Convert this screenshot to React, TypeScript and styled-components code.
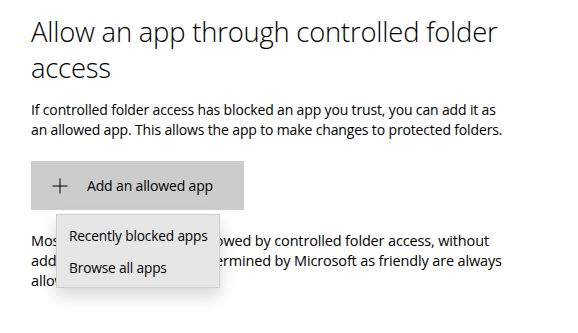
import { createGlobalStyle } from "styled-components";
import styled from "styled-components";

const GlobalStyle = createGlobalStyle`
  html, body {
    margin: 0;
    padding: 0;
    background: #ffffff;
  }
  body {
    min-height: 100vh;
    font-family: "Open Sans", "Noto Sans", "Liberation Sans", sans-serif;
    color: #000000;
  }
`;

export default function App() {
  return (
    <>
      <GlobalStyle />
      <Page>
        <Title>Allow an app through controlled folder access</Title>
        <Body>
          If controlled folder access has blocked an app you trust, you can add
          it as an allowed app. This allows the app to make changes to protected
          folders.
        </Body>

        <ButtonArea>
          <AddButton type="button">
            <PlusIcon viewBox="0 0 16 16" aria-hidden="true">
              <path d="M8 0.5V15.5M0.5 8H15.5" />
            </PlusIcon>
            Add an allowed app
          </AddButton>

          <Menu role="menu">
            <MenuItem role="menuitem">Recently blocked apps</MenuItem>
            <MenuItem role="menuitem">Browse all apps</MenuItem>
          </Menu>
        </ButtonArea>

        <Body $size={14.5}>
          Most of your apps will be allowed by controlled folder access, without
          adding them here. Apps determined by Microsoft as friendly are always
          allowed.
        </Body>
      </Page>
    </>
  );
}

const Page = styled.main`
  display: flex;
  flex-direction: column;
  align-items: flex-start;
  padding: 14px 31px 0;
  max-width: 480px;
`;

const Title = styled.h1`
  margin: 0 0 14px;
  font-size: 27.4px;
  font-weight: 300;
  line-height: 36px;
  letter-spacing: -0.2px;
`;

const Body = styled.p<{ $size?: number }>`
  margin: 0;
  font-size: ${(p) => p.$size ?? 14}px;
  line-height: 20px;
  letter-spacing: -0.15px;
`;

const ButtonArea = styled.div`
  position: relative;
  margin: 21px 0;
`;

const AddButton = styled.button`
  appearance: none;
  display: flex;
  align-items: center;
  gap: 19px;
  width: 213px;
  height: 49px;
  border: 0;
  background: #cccccc;
  color: #000000;
  font: inherit;
  font-size: 14px;
  letter-spacing: -0.15px;
  padding: 0 0 0 21px;
  cursor: default;
`;

const PlusIcon = styled.svg`
  width: 16px;
  height: 16px;
  flex: none;
  fill: none;
  stroke: #000000;
  stroke-width: 1;
`;

const Menu = styled.div`
  position: absolute;
  left: 25px;
  top: 53px;
  width: 164px;
  display: flex;
  flex-direction: column;
  padding: 4px 0;
  background: #e6e6e6;
  border: 1px solid #cfcfcf;
  box-sizing: border-box;
  box-shadow: 0 8px 16px rgba(0, 0, 0, 0.16);
`;

const MenuItem = styled.div`
  padding: 0 12px;
  height: 32px;
  display: flex;
  align-items: center;
  font-size: 13.7px;
  letter-spacing: -0.15px;
  white-space: nowrap;
  color: #000000;
`;
